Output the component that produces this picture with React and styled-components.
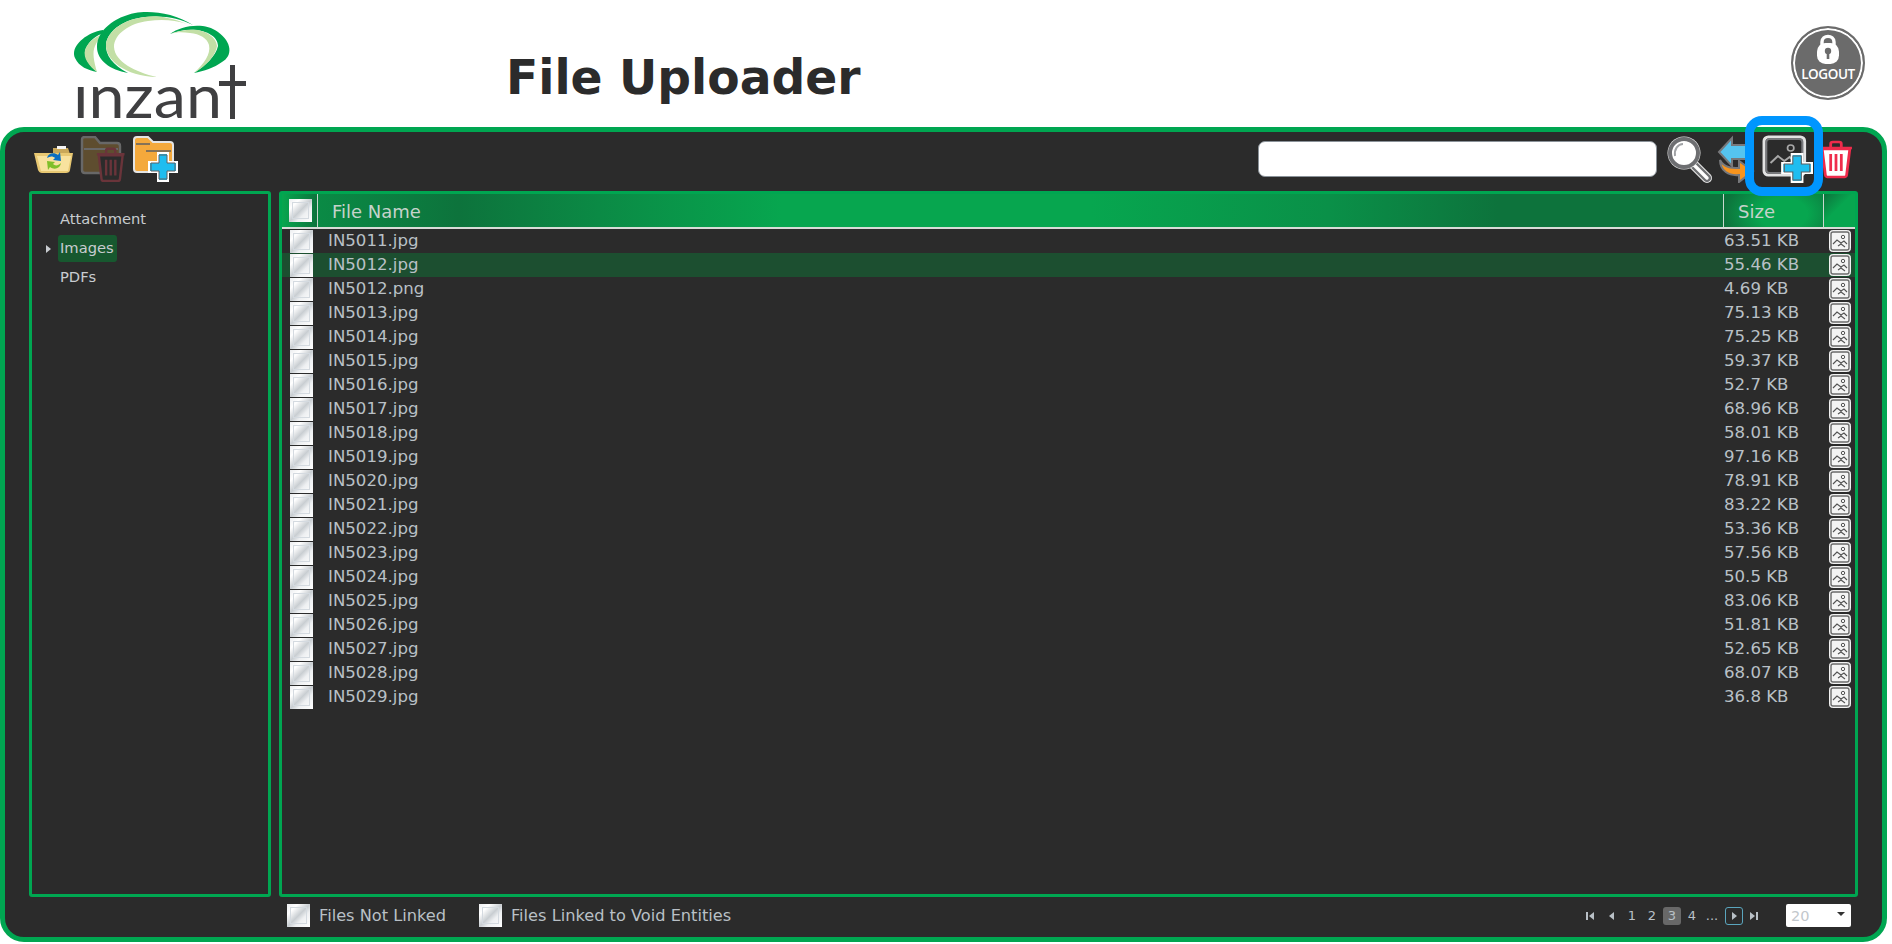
import React from 'react';
import styled, { createGlobalStyle } from 'styled-components';

const GlobalStyle = createGlobalStyle`
  html, body {
    margin: 0;
    padding: 0;
    background: #fff;
    font-family: "DejaVu Sans", Verdana, sans-serif;
  }
  *, *::before, *::after {
    box-sizing: border-box;
  }
`;

const Page = styled.div`
  width: 1892px;
  height: 944px;
  overflow: hidden;
  display: flex;
  flex-flow: column nowrap;
`;

const TopBar = styled.header`
  height: 127px;
  flex: none;
  display: flex;
  align-items: flex-start;
  padding: 0 27px 0 74px;
`;

const LogoBox = styled.div`
  width: 174px;
  height: 120px;
  flex: none;
  padding-top: 10px;
`;

const Title = styled.h1`
  margin: 47px 0 0 258px;
  font-size: 47.2px;
  line-height: 62px;
  font-weight: 700;
  color: #2b2b2b;
`;

const LogoutButton = styled.div`
  margin: 26px 0 0 auto;
  width: 74px;
  height: 74px;
  border-radius: 50%;
  background: #6b6b6b;
  border: 2px solid #6b6b6b;
  box-shadow: inset 0 0 0 2px #fff;
  display: flex;
  flex-flow: column nowrap;
  align-items: center;
  padding-top: 6px;
`;

const LogoutText = styled.span`
  margin-top: 3px;
  font-family: "Open Sans", sans-serif;
  font-size: 13.5px;
  line-height: 14px;
  font-weight: 600;
  letter-spacing: -0.4px;
  color: #fff;
`;

const Panel = styled.main`
  width: 1887px;
  height: 815px;
  flex: none;
  background: #2b2b2b;
  border: 5px solid #00a651;
  border-radius: 24px;
  display: flex;
  flex-flow: column nowrap;
`;

const Toolbar = styled.div`
  height: 59px;
  flex: none;
  display: flex;
  align-items: center;
  padding: 0 29px 5px 28px;
`;

const ToolGroup = styled.div`
  display: flex;
  align-items: center;
`;

const SearchInput = styled.div`
  width: 399px;
  height: 36px;
  background: #fff;
  border: 1px solid #8a9299;
  border-radius: 7px;
  margin-left: auto;
`;

const ToolIcon = styled.svg`
  flex: none;
  display: block;
  margin-left: ${p => p.$gap || 0}px;
`;

const ActiveTool = styled.div`
  position: relative;
  flex: none;
  margin-left: 7px;
  width: 51px;
  height: 48px;
  &::after {
    content: '';
    position: absolute;
    left: -17px;
    top: -19px;
    width: 78px;
    height: 80px;
    border: 9px solid #0096ff;
    border-radius: 17px;
  }
`;

const Body = styled.div`
  flex: 1;
  display: flex;
  min-height: 0;
  gap: 8px;
  padding: 0 24px;
`;

const TreeBox = styled.nav`
  width: 242px;
  flex: none;
  border: 3px solid #00a651;
  border-radius: 3px;
  padding: 11px 0 0 14px;
`;

const TreeRow = styled.div`
  height: 29px;
  display: flex;
  align-items: center;
  font-size: 14.7px;
  color: #c8ccd0;
`;

const TreeArrow = styled.span`
  width: 12px;
  flex: none;
  &::before {
    content: '';
    display: ${p => (p.$hidden ? 'none' : 'block')};
    width: 0;
    height: 0;
    border-left: 5px solid #c8ccd0;
    border-top: 4px solid transparent;
    border-bottom: 4px solid transparent;
  }
`;

const TreeLabel = styled.span`
  height: 27px;
  line-height: 26px;
  padding: 0 3px 0 2px;
  border-radius: 3px;
  background: ${p => (p.$active ? '#17582f' : 'transparent')};
`;

const GridBox = styled.section`
  flex: 1;
  min-width: 0;
  border: 3px solid #00a651;
  border-radius: 3px;
`;

const HeaderRow = styled.div`
  height: 35px;
  display: grid;
  grid-template-columns: 36px 1fr 100px 31px;
  grid-template-rows: 33px;
  border-bottom: 2px solid #d8dcd8;
  color: #c5d3cb;
  font-size: 18px;
`;

const HeadCell = styled.div`
  display: flex;
  align-items: center;
  line-height: 20px;
  border-right: ${p => (p.$last ? 'none' : '1px solid #c9d8cf')};
  padding-left: ${p => p.$pad || 0}px;
  background: ${p => p.$bg};
`;

const HeadLabel = styled.span`
  padding-top: 2px;
`;

const Row = styled.div`
  height: 24px;
  display: grid;
  grid-template-columns: 36px 1fr 100px 31px;
  align-items: center;
  font-size: 16.6px;
  color: #b9c0c6;
  background: ${p => (p.$selected ? '#1c4f30' : 'transparent')};
`;

const NameCell = styled.span`
  padding: 0 0 2px 10px;
`;

const SizeCell = styled.span`
  padding-bottom: 2px;
`;

const Check = styled.span`
  display: block;
  position: relative;
  width: 23px;
  height: 23px;
  flex: none;
  margin-left: ${p => p.$left || 0}px;
  background: linear-gradient(135deg, #eceef0 0%, #ffffff 24%, #c9ced2 50%, #eef0f2 66%, #ffffff 100%);
  &::after {
    content: '';
    position: absolute;
    inset: 3px;
    border: 1px solid #d4dae0;
  }
`;

const Footer = styled.footer`
  height: 40px;
  flex: none;
  display: flex;
  align-items: center;
  padding: 0 31px 3px 282px;
`;

const Legend = styled.div`
  display: flex;
  align-items: center;
  font-size: 16.2px;
  color: #b9c0c6;
  margin-right: 33px;
`;

const LegendText = styled.span`
  margin-left: 9px;
`;

const Pager = styled.div`
  margin-left: auto;
  display: flex;
  align-items: center;
  gap: 2px;
`;

const PageItem = styled.span`
  width: 18px;
  height: 18px;
  flex: none;
  display: flex;
  align-items: center;
  justify-content: center;
  font-size: 13px;
  border-radius: 3px;
  color: #b9c0c6;
  background: ${p => (p.$current ? '#686868' : 'transparent')};
  border: ${p => (p.$focus ? '1px solid #5aa5bd' : 'none')};
  margin-left: ${p => (p.$focus ? 2 : 0)}px;
  &:first-child {
    margin-right: 2px;
  }
`;

const PageSelect = styled.div`
  margin-left: 23px;
  width: 65px;
  height: 23px;
  flex: none;
  background: #fff;
  border-radius: 2px;
  display: flex;
  align-items: center;
  justify-content: space-between;
  padding: 0 6px 0 5px;
  font-size: 14.5px;
  color: #c2c7cc;
`;

const Caret = styled.span`
  display: block;
  width: 0;
  height: 0;
  margin-top: -3px;
  border-top: 4px solid #333;
  border-left: 4px solid transparent;
  border-right: 4px solid transparent;
`;

const Logo = () => (
  <svg width="174" height="126" viewBox="74 10 174 126">
    <path d="M103 30 C84 33 70 48 75 58 C79 67 88 70 97 72 C90 66 82 56 86 48 C90 40 97 35 104 33 Z" fill="#00a651" />
    <path d="M104 34 C97 36 88 41 85 50 C83 58 89 66 97 72 C94 62 92 52 95 46 C97 41 100 38 104 34 Z" fill="#c3dfa6" />
    <path d="M193 25 C175 13 150 10 135 13 C115 17 97 30 97 47 C97 60 110 70 128 73 C113 65 105 55 106 44 C108 30 125 19 145 17 C163 15 180 18 193 25 Z" fill="#00a651" />
    <path d="M187 24 C170 17 155 15 145 17 C125 19 108 30 106 44 C105 60 125 76 157 77 C135 72 115 62 114 47 C114 34 130 23 148 21 C162 19 175 20 187 24 Z" fill="#c3dfa6" />
    <path d="M170 34 C182 25 205 22 218 32 C232 42 233 56 222 62 C214 68 204 71 194 73 C205 66 216 56 218 46 C218 36 206 31 196 30 C186 29 178 31 170 34 Z" fill="#00a651" />
    <path d="M170 34 C178 31 188 29 198 30 C207 32 216 37 217 46 C216 54 208 65 194 73 C204 64 211 54 209 45 C207 38 200 34 190 33 C182 32 176 32 170 34 Z" fill="#c3dfa6" />
    <text x="73" y="118" fontFamily="Lato, sans-serif" fontSize="60" fontWeight="400" fill="#3f3f41" textLength="149" lengthAdjust="spacingAndGlyphs">ınzan</text>
    <path d="M232.5 65 V119 M219 83.5 H246" stroke="#3f3f41" strokeWidth="5" fill="none" />
  </svg>
);

const LockIcon = () => (
  <svg width="24" height="30" viewBox="0 0 24 30">
    <path d="M6 13 V8 C6 0.5 18 0.5 18 8 V13" fill="none" stroke="#fff" strokeWidth="3.4" />
    <rect x="1" y="9" width="22" height="21" rx="8.5" fill="#fff" />
    <circle cx="12" cy="17" r="3.2" fill="#6b6b6b" />
    <rect x="10.7" y="18" width="2.6" height="7" fill="#6b6b6b" />
  </svg>
);

const FolderOpenIcon = () => (
  <ToolIcon width="42" height="30" viewBox="0 0 42 30">
    <path d="M20 4 H35 L37 10 H20 Z" fill="#c9a85a" />
    <path d="M24 2 H33 V5 H24 Z" fill="#f5f5f5" />
    <path d="M1 9 H40 L37 26 C37 28 35 29 33 29 H9 C7 29 6 28 5 26 Z" fill="#e8c872" />
    <path d="M4 12 H38 L35 27 H8 Z" fill="#f8e29e" />
    <path d="M14 14 C15 9 21 8 25 11 L27 8 L28 17 L20 16 L22 14 C20 12 17 12 14 14 Z" fill="#0a6fc2" />
    <path d="M28 19 C27 25 21 26 17 23 L15 26 L14 17 L22 18 L20 20 C22 22 25 22 28 19 Z" fill="#7fbf2a" />
  </ToolIcon>
);

const TrashShape = ({ x, y, scale, line, fill }) => (
  <g transform={`translate(${x} ${y}) scale(${scale})`} fill="none" stroke={line} strokeWidth="2.6">
    <path d="M3 10 L6 36 C6 37 7 38 8 38 H24 C25 38 26 37 26 36 L29 10 Z" fill={fill} />
    <path d="M1 9 H31 M11 9 V5 C11 3 12 3 13 3 H19 C20 3 21 3 21 5 V9" />
    <path d="M11 15 V32 M16 15 V32 M21 15 V32" />
  </g>
);

const FolderTrashIcon = () => (
  <ToolIcon $gap={4} width="46" height="46" viewBox="0 0 46 46">
    <g opacity="0.42">
      <path
        d="M3 4 C3 2 4 1 6 1 H16 L21 7 H38 C40 7 41 8 41 10 V34 C41 36 40 37 38 37 H6 C4 37 3 36 3 34 Z"
        fill="#a67c36"
        stroke="#bdbdbd"
        strokeWidth="2.4"
      />
      <path d="M5 13 H39" stroke="#bdbdbd" strokeWidth="2" />
    </g>
    <TrashShape x={17} y={10} scale={0.92} line="#6a343a" fill="#2b2b2b" />
  </ToolIcon>
);

const PlusBadge = ({ x, y }) => (
  <g transform={`translate(${x} ${y})`}>
    <path d="M9 0 H19 V9 H28 V19 H19 V28 H9 V19 H0 V9 H9 Z" fill="#1fbdf0" stroke="#fff" strokeWidth="2" />
    <path d="M10 2 H18 V10 H26 V18 H18 V26 H10 V18 H2 V10 H10 Z" fill="#1fbdf0" stroke="#5f6062" strokeWidth="1" />
  </g>
);

const FolderPlusIcon = () => (
  <ToolIcon $gap={7} width="46" height="46" viewBox="0 0 46 46">
    <path
      d="M2 4 C2 2 3 1 5 1 H16 L21 6 H38 C40 6 41 7 41 9 V33 C41 35 40 36 38 36 H5 C3 36 2 35 2 33 Z"
      fill="#f4a93c"
      stroke="#e4e4e4"
      strokeWidth="2"
    />
    <path d="M4 8 H18 M14 15 H39" stroke="#5f6062" strokeWidth="1.6" />
    <PlusBadge x={17} y={17} />
  </ToolIcon>
);

const SearchIcon = () => (
  <ToolIcon $gap={9} width="46" height="48" viewBox="0 0 46 48">
    <path d="M27 29 L41 43" stroke="#e8e8e8" strokeWidth="10" strokeLinecap="round" />
    <path d="M27 29 L41 43" stroke="#6d6e71" strokeWidth="8" strokeLinecap="round" />
    <path d="M28 30 L41 43" stroke="#fff" strokeWidth="3.4" strokeLinecap="round" />
    <circle cx="18" cy="18" r="16.5" fill="#e8e8e8" />
    <circle cx="18" cy="18" r="14" fill="#fff" stroke="#6d6e71" strokeWidth="4" />
    <path d="M9 21 C8 14 12 9 17 9" fill="none" stroke="#a0a2a5" strokeWidth="2" />
  </ToolIcon>
);

const ArrowsIcon = () => (
  <ToolIcon $gap={5} width="38" height="48" viewBox="0 0 38 48">
    <path d="M2 17 L15 3 V10 H34 V24 H15 V31 Z" fill="#55c4ef" stroke="#77787b" strokeWidth="2" />
    <path d="M3 25 C7 33 15 33 22 33 V26 L36 36 L22 47 V40 C12 41 3 36 3 25 Z" fill="#f7941d" stroke="#77787b" strokeWidth="2" />
  </ToolIcon>
);

const ImagePlusIcon = () => (
  <ToolIcon width="51" height="48" viewBox="0 0 48 48" preserveAspectRatio="none">
    <rect x="2" y="2" width="38" height="38" rx="4" fill="#2b2b2b" stroke="#e2e2e2" strokeWidth="3" />
    <rect x="4" y="4" width="34" height="34" rx="3" fill="none" stroke="#77787b" strokeWidth="2" />
    <circle cx="27" cy="13" r="3" fill="none" stroke="#a8a8a8" strokeWidth="1.6" />
    <path d="M8 28 L15 21 L21 26 L26 22 L32 28" fill="none" stroke="#a8a8a8" strokeWidth="1.8" />
    <PlusBadge x={19} y={19} />
  </ToolIcon>
);

const TrashIcon = () => (
  <ToolIcon $gap={6} width="34" height="40" viewBox="0 0 32 40" preserveAspectRatio="none">
    <TrashShape x={0} y={0} scale={1} line="#ef2b4b" fill="#fff" />
  </ToolIcon>
);

const ThumbIcon = () => (
  <svg width="22" height="22" viewBox="0 0 22 22" style={{ marginLeft: 5 }}>
    <rect x="0.5" y="0.5" width="21" height="21" rx="3" fill="#fff" stroke="#f2f2f2" />
    <rect x="2" y="2" width="18" height="18" rx="2" fill="#f4f4f4" stroke="#6a6a6a" strokeWidth="1.4" />
    <circle cx="14" cy="7" r="1.7" fill="none" stroke="#555" strokeWidth="1" />
    <path d="M4 14 L8 10 L12 13 L15 11 L18 14 M9 16 L12 14 L16 17" fill="none" stroke="#555" strokeWidth="1.1" />
  </svg>
);

const PagerIcon = ({ d }) => (
  <svg width="10" height="10" viewBox="0 0 10 10">
    <path d={d} fill="#b9c0c6" />
  </svg>
);

const files = [
  ['IN5011.jpg', '63.51 KB'],
  ['IN5012.jpg', '55.46 KB'],
  ['IN5012.png', '4.69 KB'],
  ['IN5013.jpg', '75.13 KB'],
  ['IN5014.jpg', '75.25 KB'],
  ['IN5015.jpg', '59.37 KB'],
  ['IN5016.jpg', '52.7 KB'],
  ['IN5017.jpg', '68.96 KB'],
  ['IN5018.jpg', '58.01 KB'],
  ['IN5019.jpg', '97.16 KB'],
  ['IN5020.jpg', '78.91 KB'],
  ['IN5021.jpg', '83.22 KB'],
  ['IN5022.jpg', '53.36 KB'],
  ['IN5023.jpg', '57.56 KB'],
  ['IN5024.jpg', '50.5 KB'],
  ['IN5025.jpg', '83.06 KB'],
  ['IN5026.jpg', '51.81 KB'],
  ['IN5027.jpg', '52.65 KB'],
  ['IN5028.jpg', '68.07 KB'],
  ['IN5029.jpg', '36.8 KB'],
];

const green = '#07a64f';
const dark = '#0d733c';

const App = () => (
  <Page>
    <GlobalStyle />
    <TopBar>
      <LogoBox>
        <Logo />
      </LogoBox>
      <Title>File Uploader</Title>
      <LogoutButton>
        <LockIcon />
        <LogoutText>LOGOUT</LogoutText>
      </LogoutButton>
    </TopBar>
    <Panel>
      <Toolbar>
        <ToolGroup>
          <FolderOpenIcon />
          <FolderTrashIcon />
          <FolderPlusIcon />
        </ToolGroup>
        <SearchInput />
        <ToolGroup>
          <SearchIcon />
          <ArrowsIcon />
          <ActiveTool>
            <ImagePlusIcon />
          </ActiveTool>
          <TrashIcon />
        </ToolGroup>
      </Toolbar>
      <Body>
        <TreeBox>
          <TreeRow>
            <TreeArrow $hidden />
            <TreeLabel>Attachment</TreeLabel>
          </TreeRow>
          <TreeRow>
            <TreeArrow />
            <TreeLabel $active>Images</TreeLabel>
          </TreeRow>
          <TreeRow>
            <TreeArrow $hidden />
            <TreeLabel>PDFs</TreeLabel>
          </TreeRow>
        </TreeBox>
        <GridBox>
          <HeaderRow>
            <HeadCell $bg={`linear-gradient(90deg, ${green}, ${dark})`}>
              <Check $left={7} />
            </HeadCell>
            <HeadCell
              $pad={14}
              $bg={`linear-gradient(90deg, #0a8a45 0%, ${dark} 10%, #0b8a45 20%, ${green} 33%, ${green} 55%, #0a9048 72%, ${dark} 84%, ${dark} 100%)`}
            >
              <HeadLabel>File Name</HeadLabel>
            </HeadCell>
            <HeadCell
              $pad={14}
              $bg={`radial-gradient(ellipse 60px 40px at 60% 60%, ${green} 40%, ${dark} 100%)`}
            >
              <HeadLabel>Size</HeadLabel>
            </HeadCell>
            <HeadCell
              $last
              $bg={`linear-gradient(135deg, ${dark} 0%, ${green} 45%, ${green} 100%)`}
            />
          </HeaderRow>
          {files.map(([name, size], i) => (
            <Row key={name} $selected={i === 1}>
              <Check $left={8} />
              <NameCell>{name}</NameCell>
              <SizeCell>{size}</SizeCell>
              <ThumbIcon />
            </Row>
          ))}
        </GridBox>
      </Body>
      <Footer>
        <Legend>
          <Check />
          <LegendText>Files Not Linked</LegendText>
        </Legend>
        <Legend>
          <Check />
          <LegendText>Files Linked to Void Entities</LegendText>
        </Legend>
        <Pager>
          <PageItem><PagerIcon d="M1 1 H3 V9 H1 Z M9 1 V9 L4 5 Z" /></PageItem>
          <PageItem><PagerIcon d="M7 1 V9 L2 5 Z" /></PageItem>
          <PageItem>1</PageItem>
          <PageItem>2</PageItem>
          <PageItem $current>3</PageItem>
          <PageItem>4</PageItem>
          <PageItem>...</PageItem>
          <PageItem $focus><PagerIcon d="M3 1 V9 L8 5 Z" /></PageItem>
          <PageItem><PagerIcon d="M1 1 V9 L6 5 Z M7 1 H9 V9 H7 Z" /></PageItem>
        </Pager>
        <PageSelect>
          20
          <Caret />
        </PageSelect>
      </Footer>
    </Panel>
  </Page>
);

export default App;
